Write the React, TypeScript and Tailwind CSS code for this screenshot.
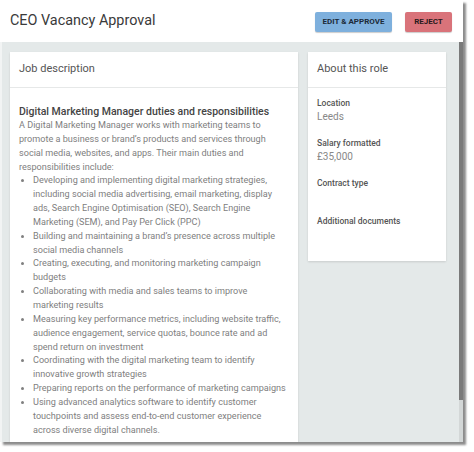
import React from 'react';

const duties = [
  'Developing and implementing digital marketing strategies, including social media advertising, email marketing, display ads, Search Engine Optimisation (SEO), Search Engine Marketing (SEM), and Pay Per Click (PPC)',
  'Building and maintaining a brand’s presence across multiple social media channels',
  'Creating, executing, and monitoring marketing campaign budgets',
  'Collaborating with media and sales teams to improve marketing results',
  'Measuring key performance metrics, including website traffic, audience engagement, service quotas, bounce rate and ad spend return on investment',
  'Coordinating with the digital marketing team to identify innovative growth strategies',
  'Preparing reports on the performance of marketing campaigns',
  'Using advanced analytics software to identify customer touchpoints and assess end-to-end customer experience across diverse digital channels.',
];

const facts = [
  { label: 'Location', value: 'Leeds' },
  { label: 'Salary formatted', value: '£35,000' },
  { label: 'Contract type', value: '' },
  { label: 'Additional documents', value: '' },
];

export default function App() {
  return (
    <div className="min-h-screen bg-white font-['Roboto',sans-serif]">
      <div className="w-[463px] h-[442px] flex flex-col overflow-hidden bg-white shadow-[3px_3px_2px_rgba(0,0,0,0.45)]">
        <div className="h-[42px] shrink-0 flex items-center justify-between pl-[10px] pr-[11px] bg-white">
          <h1 className="text-[14.4px] text-[#3a3a3a] font-normal">CEO Vacancy Approval</h1>
          <div className="flex gap-[13px] mt-[2px]">
            <button className="w-[77px] h-[20px] rounded-[2px] bg-[#7eb0dd] text-[#1c2a38] text-[8px] font-bold shadow-[0_1px_1px_rgba(0,0,0,0.2)]">
              EDIT &amp; APPROVE
            </button>
            <button className="w-[47px] h-[20px] rounded-[2px] bg-[#d9737a] text-[#2a1a1c] text-[8px] font-bold shadow-[0_1px_1px_rgba(0,0,0,0.2)]">
              REJECT
            </button>
          </div>
        </div>

        <div className="flex-1 flex bg-[#e4e9e9] overflow-hidden border-l-2 border-[#f2f4f4]">
          <div className="flex-1 flex items-start gap-[10px] pl-[8px] pt-[10px] pr-[13px] overflow-hidden">
            <div className="w-[288px] shrink-0 bg-white shadow-[0_1px_2px_rgba(0,0,0,0.12)] min-h-[400px]">
              <div className="h-[36px] flex items-center px-[9px] border-b border-[#e6e8e8] text-[11px] text-[#555]">
                Job description
              </div>
              <div className="pl-[9px] pr-[8px] pt-[17px] pb-[12px] text-[9.1px] leading-[13.85px] text-[#808080]">
                <h2 className="text-[10.5px] font-medium text-[#444] leading-[14px]">
                  Digital Marketing Manager duties and responsibilities
                </h2>
                <p>
                  A Digital Marketing Manager works with marketing teams to promote a business or brand’s products and services through social media, websites, and apps. Their main duties and responsibilities include:
                </p>
                <ul className="list-disc pl-[14px]">
                  {duties.map((d) => (
                    <li key={d}>{d}</li>
                  ))}
                </ul>
              </div>
            </div>

            <div className="w-[138px] shrink-0 bg-white shadow-[0_1px_2px_rgba(0,0,0,0.12)]">
              <div className="h-[36px] flex items-center px-[9px] border-b border-[#e6e8e8] text-[11px] text-[#555]">
                About this role
              </div>
              <div className="px-[9px] pt-[9px] pb-[8px]">
                {facts.map((f) => (
                  <div key={f.label} className="mb-[14px]">
                    <div className="text-[8.5px] font-medium text-[#555] leading-[13px]">{f.label}</div>
                    <div className="text-[10px] text-[#888] leading-[13px] min-h-[11px]">{f.value}</div>
                  </div>
                ))}
              </div>
            </div>
          </div>
          <div className="w-[4px] shrink-0 flex flex-col">
            <div className="h-[358px] bg-[#7a7a7a]" />
            <div className="flex-1 bg-[#d3d7d7]" />
          </div>
        </div>
      </div>
    </div>
  );
}
